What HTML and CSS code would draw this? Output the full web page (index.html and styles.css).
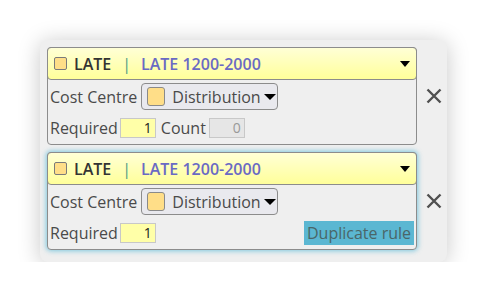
FILE: index.html
```html
<!DOCTYPE html>
<html>
<head>
<meta charset="utf-8">
<link rel="stylesheet" href="styles.css">
</head>
<body>
<div class="panel">
  <div class="rule">
    <div class="card">
      <div class="head">
        <span class="chk"></span>
        <span class="code">LATE</span>
        <span class="pipe">|</span>
        <span class="name">LATE 1200-2000</span>
        <span class="arrow big"></span>
      </div>
      <div class="row r2">
        <span class="lbl">Cost Centre</span>
        <span class="sel"><span class="sw"></span><span class="seltext">Distribution</span><span class="arrow"></span></span>
      </div>
      <div class="row r3">
        <span class="lbl">Required</span>
        <span class="inp req">1</span>
        <span class="lbl cnt">Count</span>
        <span class="inp dis">0</span>
      </div>
    </div>
    <div class="close"><svg width="16" height="16" viewBox="0 0 16 16"><path d="M1.5 1.5 L14.5 14.5 M14.5 1.5 L1.5 14.5" stroke="#505050" stroke-width="2.4" fill="none"/></svg></div>
  </div>
  <div class="rule">
    <div class="card focus">
      <div class="head">
        <span class="chk"></span>
        <span class="code">LATE</span>
        <span class="pipe">|</span>
        <span class="name">LATE 1200-2000</span>
        <span class="arrow big"></span>
      </div>
      <div class="row r2">
        <span class="lbl">Cost Centre</span>
        <span class="sel"><span class="sw"></span><span class="seltext">Distribution</span><span class="arrow"></span></span>
      </div>
      <div class="row r3">
        <span class="lbl">Required</span>
        <span class="inp req">1</span>
        <span class="dup">Duplicate rule</span>
      </div>
    </div>
    <div class="close"><svg width="16" height="16" viewBox="0 0 16 16"><path d="M1.5 1.5 L14.5 14.5 M14.5 1.5 L1.5 14.5" stroke="#505050" stroke-width="2.4" fill="none"/></svg></div>
  </div>
</div>
</body>
</html>
```
FILE: styles.css
```css
html, body {
  margin: 0;
  padding: 0;
  background: #ffffff;
}
body {
  font-family: "Open Sans", "Noto Sans", sans-serif;
  font-size: 16px;
  color: #4a4a4a;
}
.panel {
  margin: 40px 0 0 40px;
  width: 407px;
  height: 222px;
  box-sizing: border-box;
  padding: 7px 0 0 7px;
  background: #efefef;
  border-radius: 8px;
  box-shadow: 0 2px 22px rgba(0, 0, 0, 0.22);
  display: flex;
  flex-direction: column;
  gap: 7px;
}
.rule {
  display: flex;
  align-items: center;
}
.card {
  width: 371px;
  height: 98px;
  box-sizing: border-box;
  border: 1px solid #8c8c8c;
  border-radius: 4px;
  background: #efefef;
}
.card.focus {
  box-shadow: 0 0 5px 1px rgba(90, 185, 215, 0.75);
}
.head {
  margin: -1px -1px 0 -1px;
  height: 33px;
  box-sizing: border-box;
  border: 1px solid #8c8c8c;
  border-radius: 4px;
  background: linear-gradient(#ffffd6, #ffff9a);
  display: flex;
  align-items: center;
  padding: 0 6px 0 6px;
  font-weight: 600;
}
.chk {
  width: 11px;
  height: 11px;
  border: 1px solid #7a7a7a;
  border-radius: 2px;
  background: #ffde88;
  margin-right: 7px;
}
.code {
  color: #333333;
}
.pipe {
  color: #4f9c86;
  font-weight: 400;
  margin: 0 10px 0 11px;
}
.name {
  color: #6a6ac4;
  flex: 1;
}
.arrow {
  width: 0;
  height: 0;
  border-left: 6px solid transparent;
  border-right: 6px solid transparent;
  border-top: 6px solid #000;
}
.arrow.big {
  border-left-width: 5px;
  border-right-width: 5px;
}
.row {
  display: flex;
  align-items: center;
  padding-left: 2px;
}
.r2 {
  margin-top: 3px;
  height: 27px;
}
.r3 {
  margin-top: 6px;
  height: 24px;
  padding-right: 2px;
}
.lbl {
  color: #4a4a4a;
}
.sel {
  margin-left: 4px;
  width: 137px;
  height: 27px;
  box-sizing: border-box;
  border: 1px solid #8c8c8c;
  border-radius: 4px;
  background: #e9e9ee;
  display: flex;
  align-items: center;
  padding-left: 5px;
}
.sw {
  width: 16px;
  height: 17px;
  border: 1px solid #8a8a8a;
  border-radius: 3px;
  background: #ffde88;
  margin-right: 7px;
}
.seltext {
  margin-right: 3px;
}
.inp {
  width: 36px;
  height: 20px;
  box-sizing: border-box;
  border: 1px solid #c8c8c8;
  text-align: right;
  padding-right: 3px;
  font-size: 14px;
  line-height: 18px;
}
.req {
  margin-left: 2px;
  background: #ffffa8;
  color: #222;
}
.cnt {
  margin-left: 5px;
}
.dis {
  margin-left: 3px;
  background: #e6e6e6;
  color: #999;
}
.dup {
  margin-left: auto;
  height: 24px;
  line-height: 24px;
  padding: 0 3px;
  background: #5bb7d2;
  color: #4a6668;
}
.close {
  width: 30px;
  padding-left: 9px;
  box-sizing: border-box;
  display: flex;
  align-items: center;
}
.close svg {
  display: block;
}
```
